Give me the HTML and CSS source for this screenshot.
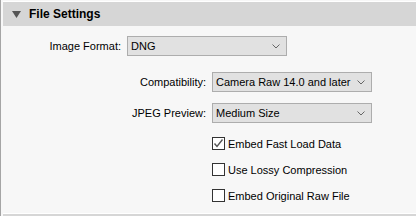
FILE: index.html
```html
<!DOCTYPE html>
<html lang="en-US">
<head>
    <meta charset="UTF-8">
    <title>File Settings</title>
    <link rel="stylesheet" href="styles.css">
</head>
<body>
    <div class="panel">
        <div class="panel-header">
            <svg class="twisty" width="9" height="7" viewBox="0 0 9 7"><path d="M0 0H9L4.5 7Z" fill="#555"/></svg>
            <span class="panel-title">File Settings</span>
        </div>

        <div class="panel-body">
            <div class="field field-first">
                <label class="field-label label-short">Image Format:</label>
                <div class="select">
                    <span>DNG</span>
                    <svg class="chevron" width="8" height="5" viewBox="0 0 8 5"><path d="M0.5 0.5L4 4L7.5 0.5" fill="none" stroke="#666"/></svg>
                </div>
            </div>

            <div class="field field-compat">
                <label class="field-label label-long">Compatibility:</label>
                <div class="select">
                    <span>Camera Raw 14.0 and later</span>
                    <svg class="chevron" width="8" height="5" viewBox="0 0 8 5"><path d="M0.5 0.5L4 4L7.5 0.5" fill="none" stroke="#666"/></svg>
                </div>
            </div>

            <div class="field field-preview">
                <label class="field-label label-long">JPEG Preview:</label>
                <div class="select">
                    <span>Medium Size</span>
                    <svg class="chevron" width="8" height="5" viewBox="0 0 8 5"><path d="M0.5 0.5L4 4L7.5 0.5" fill="none" stroke="#666"/></svg>
                </div>
            </div>

            <div class="checks">
                <div class="check-row">
                    <span class="checkbox">
                        <svg width="11" height="11" viewBox="0 0 11 11"><path d="M1.5 5.5L4 8.5L9.5 1.5" fill="none" stroke="#555" stroke-width="1.4"/></svg>
                    </span>
                    <span>Embed Fast Load Data</span>
                </div>
                <div class="check-row">
                    <span class="checkbox"></span>
                    <span>Use Lossy Compression</span>
                </div>
                <div class="check-row">
                    <span class="checkbox"></span>
                    <span>Embed Original Raw File</span>
                </div>
            </div>
        </div>

        <div class="panel-header next-header"></div>
    </div>
</body>
</html>
```

FILE: styles.css
```css
:root {
    --ui-font: "Liberation Sans", Arial, sans-serif;
    --panel-bg: #f7f7f7;
    --header-bg: #d6d6d6;
    --field-bg: #e1e1e1;
    --field-border: #adadad;
    --text-color: #000;
}

* {
    margin: 0;
    padding: 0;
    box-sizing: border-box;
}

body {
    font-family: var(--ui-font);
    font-size: 11px;
    color: var(--text-color);
    background-color: #f0f0f0;
    width: 416px;
    height: 216px;
    overflow: hidden;
}

.panel {
    border-left: 1px solid #a5a5a5;
    padding-top: 1px;
    background-color: var(--panel-bg);
    height: 216px;
}

.panel-header {
    margin-left: 2px;
    border-top: 1px solid #fff;
    height: 25px;
    background-color: var(--header-bg);
    display: flex;
    align-items: center;
    padding-left: 9px;
}

.twisty {
    margin-right: 8px;
}

.panel-title {
    font-weight: bold;
    font-size: 12px;
}

.panel-body {
    height: 187px;
    padding-top: 10px;
}

.field {
    display: flex;
    align-items: center;
    height: 20px;
    white-space: nowrap;
}

.field-compat {
    margin-top: 16px;
}

.field-preview {
    margin-top: 11px;
}

.field-label {
    text-align: right;
    padding-right: 6px;
    flex-shrink: 0;
}

.label-short {
    width: 126px;
}

.label-long {
    width: 211px;
}

.select {
    width: 160px;
    height: 20px;
    background-color: var(--field-bg);
    border: 1px solid var(--field-border);
    display: flex;
    align-items: center;
    justify-content: space-between;
    padding: 0 6px 0 3px;
}

.checks {
    margin-top: 14px;
    padding-left: 211px;
    display: flex;
    flex-direction: column;
    gap: 13px;
}

.check-row {
    display: flex;
    align-items: center;
    height: 13px;
    white-space: nowrap;
}

.checkbox {
    width: 13px;
    height: 13px;
    border: 1px solid #333;
    background-color: #fff;
    margin-right: 3px;
    display: flex;
    align-items: center;
    justify-content: center;
}

.next-header {
    height: 4px;
}
```
